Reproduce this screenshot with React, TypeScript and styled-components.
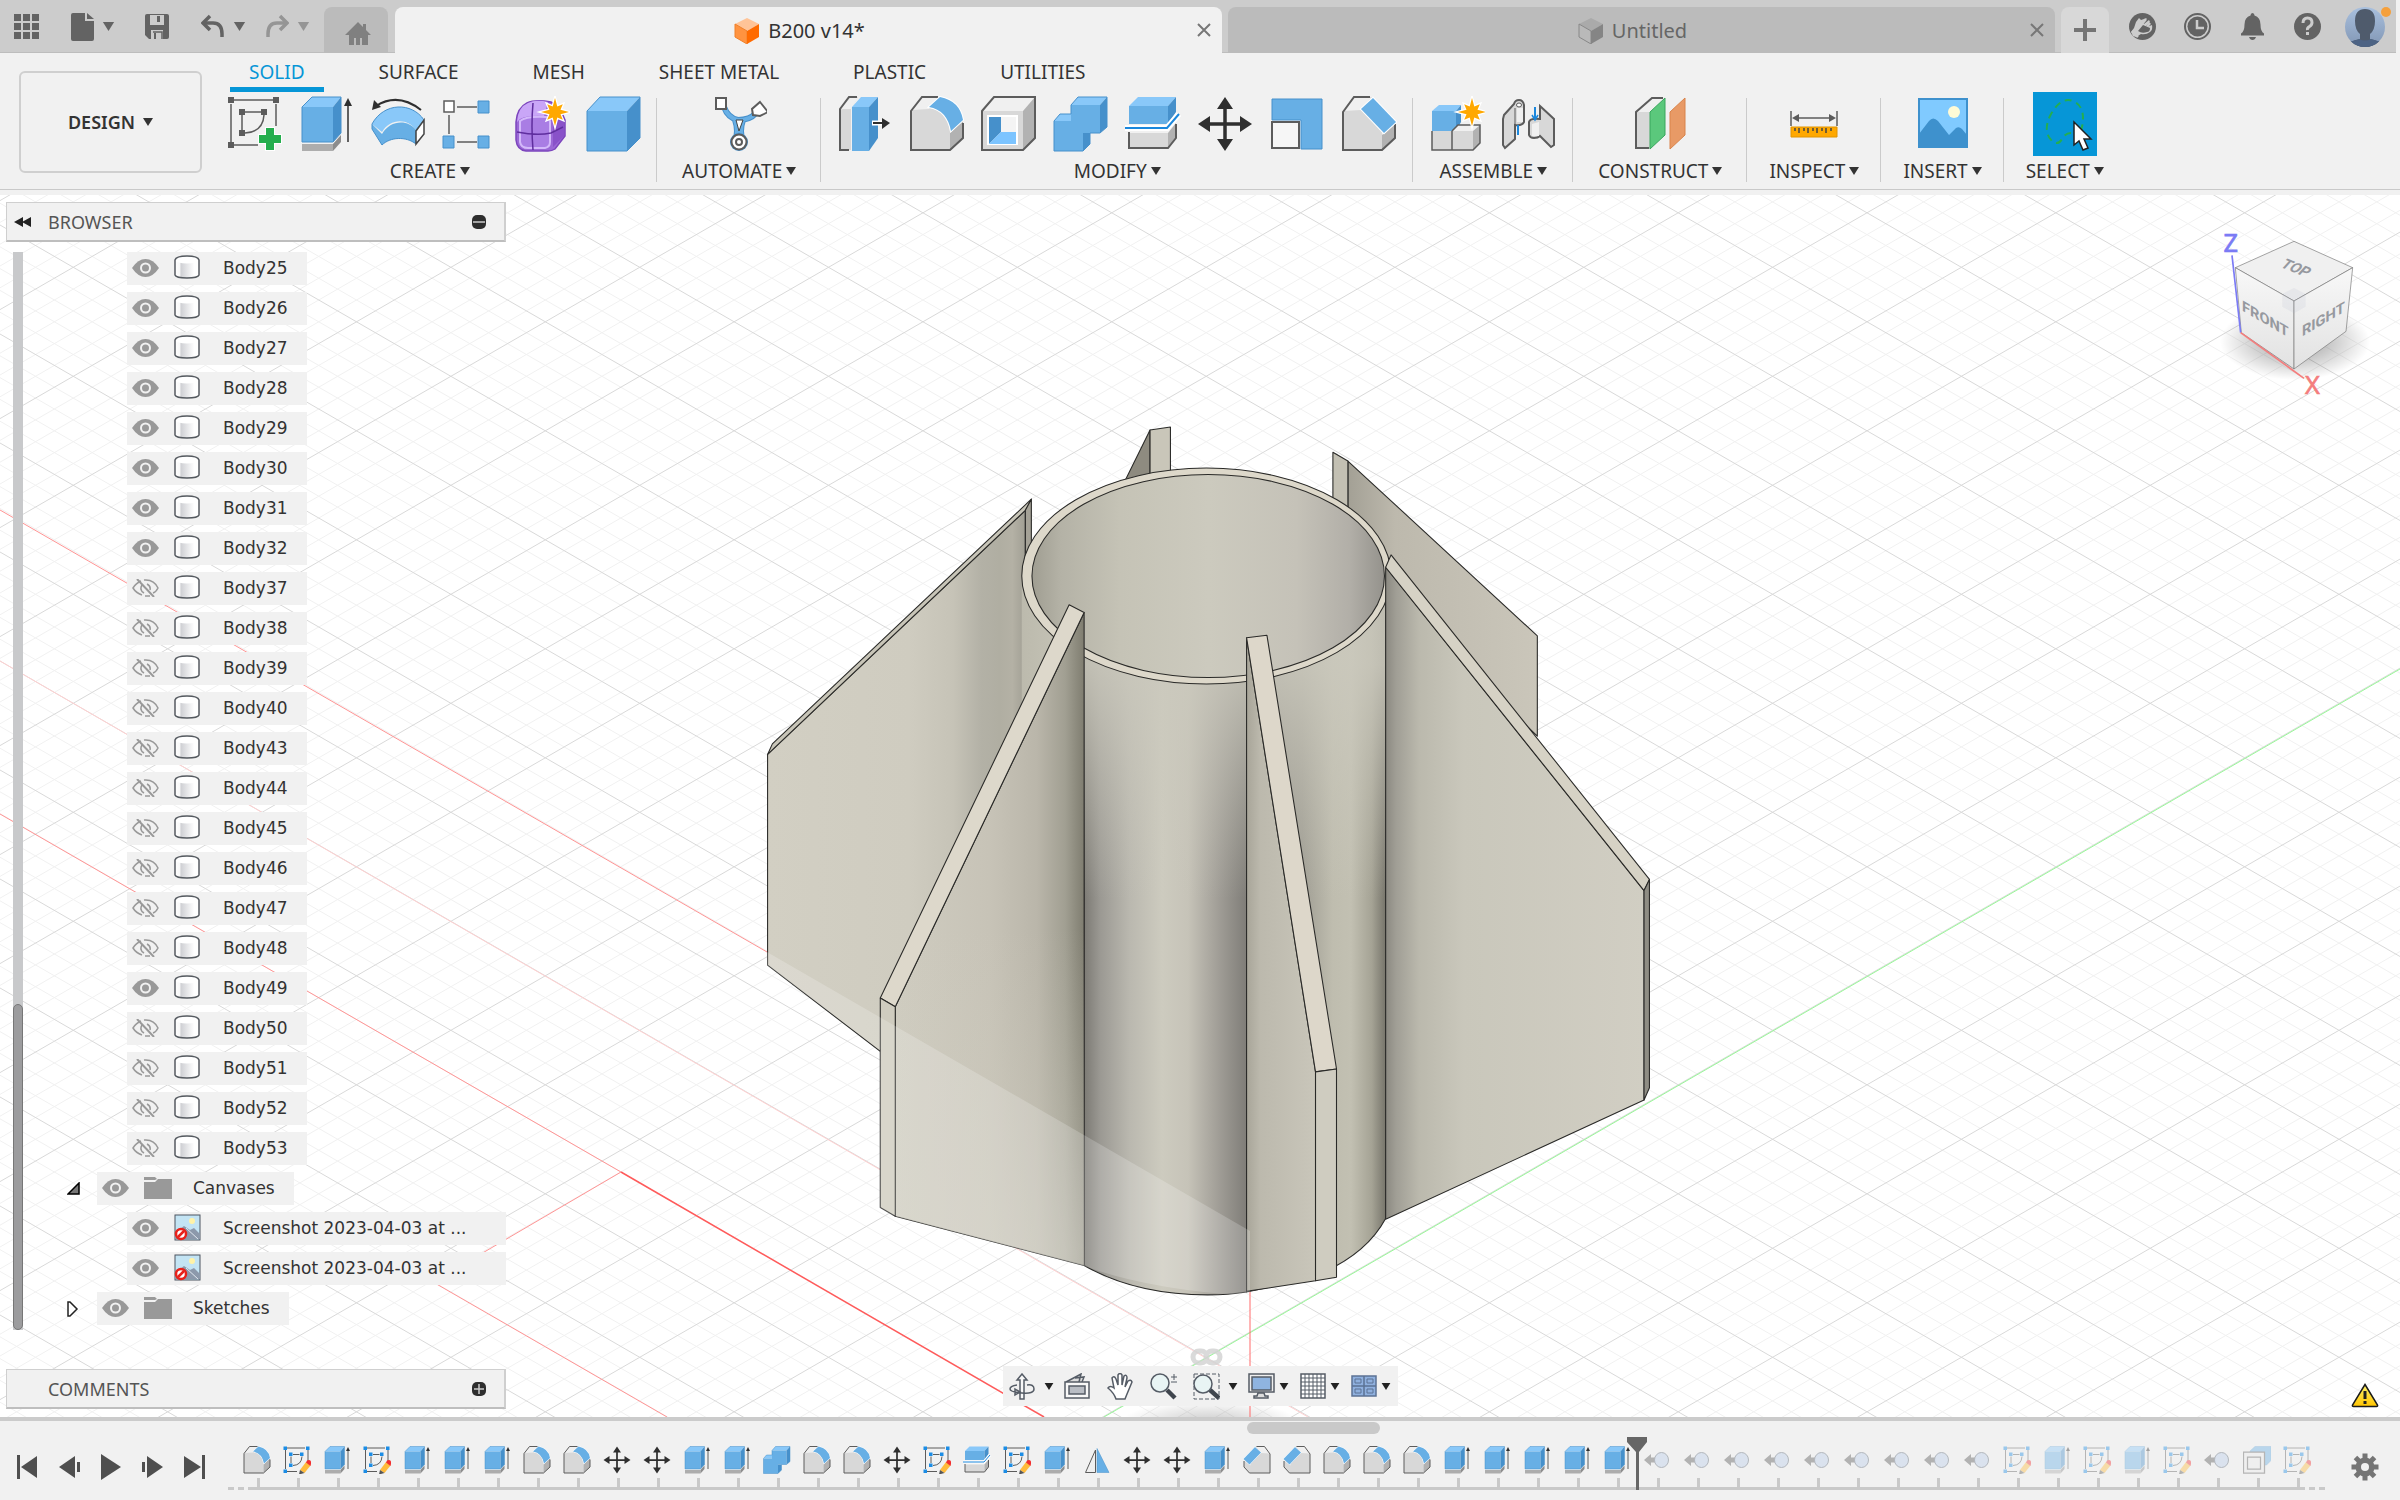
import React from "react";
import styled, { createGlobalStyle } from "styled-components";

const blue = "#67afe5";
const blueTop = "#89c8f9";
const blueSide = "#4690cb";
const line = "#5c5c5c";
const face = "#d8d8d8";
const faceTop = "#f0f0f0";
const faceSide = "#b2b2b2";

const GlobalStyle = createGlobalStyle`
  * { box-sizing: border-box; }
  html, body, #root { height: 100%; }
  body {
    margin: 0;
    background: #f1f1f1;
    color: #333;
    font-family: "Noto Sans", "Open Sans", sans-serif;
    font-size: 18px;
    line-height: 24px;
    overflow: hidden;
  }
  button { font: inherit; color: inherit; border: 0; padding: 0; background: none; }
  svg { display: block; flex: none; }
`;

/* ---------- layout ---------- */

const Page = styled.div`
  display: flex;
  flex-direction: column;
  height: 100vh;
`;

const TitleBar = styled.header`
  display: flex;
  align-items: flex-end;
  height: 53px;
  margin-right: 4px;
  background: #ccc;
  box-shadow: inset 0 -1px #bdbdbd;
`;

const QuickAccess = styled.div`
  display: flex;
  align-items: center;
  align-self: stretch;
  width: 324px;
  padding-left: 14px;
  color: #636363;
`;

const QuickButton = styled.button<{ $gap: number; $faded?: boolean }>`
  display: flex;
  align-items: center;
  gap: 8px;
  margin-right: ${(p) => p.$gap}px;
  color: ${(p) => (p.$faded ? "#959595" : "#636363")};
`;

const HomeTab = styled.button`
  display: grid;
  place-items: center;
  width: 64px;
  height: 46px;
  margin-right: 7px;
  padding: 6px 0 0 4px;
  border-radius: 8px 8px 0 0;
  background: #bbb;
  color: #808080;
`;

const DocTab = styled.div<{ $active?: boolean }>`
  display: flex;
  flex: 1;
  align-items: center;
  height: 46px;
  margin-right: 6px;
  padding-right: 10px;
  border-radius: 8px 8px 0 0;
  background: ${(p) => (p.$active ? "#f1f1f1" : "#bbb")};
  color: ${(p) => (p.$active ? "#333" : "#666")};
`;

const DocName = styled.button`
  display: flex;
  flex: 1;
  align-items: center;
  justify-content: center;
  gap: 8px;
  padding: 2px 0 0 8px;
  font-size: 20px;
`;

const AddTab = styled.button`
  display: grid;
  place-items: center;
  width: 48px;
  height: 46px;
  border-radius: 8px 8px 0 0;
  background: #d8d8d8;
  color: #757575;
`;

const Account = styled.div`
  display: flex;
  align-items: center;
  gap: 28px;
  align-self: stretch;
  width: 287px;
  padding-left: 20px;
  color: #636363;
`;

const StatusButton = styled.button`
  display: grid;
  place-items: center;
  width: 27px;
`;

const Avatar = styled.button`
  position: relative;
  width: 40px;
  height: 40px;
  margin-left: -4px;
`;

const AvatarDot = styled.span`
  position: absolute;
  top: 0;
  right: -6px;
  width: 10px;
  height: 10px;
  border-radius: 50%;
  background: #f5a03c;
`;

const Ribbon = styled.section`
  display: flex;
  height: 142px;
  padding-left: 19px;
  background: linear-gradient(#f1f1f1 136px, #c9c9c9 136px, #c9c9c9 137px, #f1f1f1 137px);
`;

const Workspace = styled.button`
  display: flex;
  align-items: center;
  justify-content: center;
  gap: 8px;
  width: 183px;
  height: 102px;
  margin-top: 18px;
  border: 2px solid #cfcfcf;
  border-radius: 6px;
  font-weight: 600;
`;

const RibbonMain = styled.div`
  display: flex;
  flex-direction: column;
`;

const RibbonTabs = styled.nav`
  display: flex;
  gap: 36px;
  height: 39px;
  padding-left: 28px;
`;

const RibbonTab = styled.button<{ $active?: boolean }>`
  height: 39px;
  padding: 4px 19px 0;
  border-bottom: 5px solid ${(p) => (p.$active ? "#0696d7" : "transparent")};
  color: ${(p) => (p.$active ? "#0696d7" : "#333")};
  font-size: 19px;
`;

const Groups = styled.div`
  display: flex;
  height: 91px;
`;

const Group = styled.div<{ $narrow?: boolean }>`
  display: flex;
  flex-direction: column;
  align-items: center;
  padding: 0 ${(p) => (p.$narrow ? 13 : 16)}px;
  background: linear-gradient(#cbcbcb, #cbcbcb) 100% 6px / 1px 84px no-repeat;
  &:first-child { padding: 0 15px 0 24px; }
  &:first-child > button { margin-right: 8px; }
  &:last-child { background: none; }
`;

const Tools = styled.div`
  display: flex;
  align-items: center;
  gap: 16px;
  height: 66px;
`;

const Tool = styled.button<{ $active?: boolean }>`
  display: grid;
  place-items: center;
  width: ${(p) => (p.$active ? 64 : 56)}px;
  height: ${(p) => (p.$active ? 64 : 56)}px;
  background: ${(p) => (p.$active ? "#0696d7" : "none")};
`;

const GroupLabel = styled.button`
  display: flex;
  align-items: center;
  gap: 4px;
  height: 24px;
  padding: 0 9px;
  margin-top: 3px;
  font-size: 19px;
`;

const Viewport = styled.main`
  position: relative;
  flex: 1;
  min-height: 0;
  overflow: hidden;
  background: #fff;
`;

const Scene = styled.svg`
  position: absolute;
  inset: 0;
  width: 100%;
  height: 100%;
`;

const CubeHolder = styled.div`
  position: absolute;
  top: 5px;
  right: 0;
`;

const Sidebar = styled.aside`
  position: absolute;
  top: 7px;
  bottom: 8px;
  left: 6px;
  display: flex;
  flex-direction: column;
  width: 500px;
`;

const PanelBar = styled.div`
  display: flex;
  align-items: center;
  height: 40px;
  padding: 0 18px 0 7px;
  border: 1px solid #cfcfcf;
  border-right-width: 2px;
  border-bottom: 2px solid #bebebe;
  background: #f1f1f1;
  color: #555;
`;

const PanelTitle = styled.h2`
  flex: 1;
  margin: 0;
  font-size: 18px;
  font-weight: 400;
`;

const Collapse = styled.button`
  width: 34px;
`;

const TreeArea = styled.div`
  display: flex;
  flex: 1;
  min-height: 0;
  padding: 10px 0 39px 7px;
`;

const ScrollTrack = styled.div`
  display: flex;
  flex-direction: column;
  justify-content: flex-end;
  width: 10px;
  background: #c8c9cb;
`;

const ScrollThumb = styled.div`
  height: 326px;
  border: 1px solid #777;
  border-radius: 5px;
  background: #9c9c9e;
`;

const Tree = styled.ul`
  display: flex;
  flex: 1;
  flex-direction: column;
  gap: 7px;
  margin: 0;
  padding: 0;
  list-style: none;
`;

const TreeLine = styled.li<{ $level: number }>`
  display: flex;
  padding-left: ${(p) => (p.$level === 2 ? 104 : 44)}px;
`;

const Twisty = styled.button`
  display: flex;
  align-items: center;
  width: 30px;
`;

const TreeItem = styled.div<{ $fill?: boolean }>`
  display: flex;
  flex: ${(p) => (p.$fill ? 1 : "none")};
  align-items: center;
  min-width: 178px;
  height: 33px;
  padding: 0 19px 2px 5px;
  background: #f1f1f1;
  color: #333;
  font-family: "DejaVu Sans", "Noto Sans", sans-serif;
  font-size: 17px;
`;

const EyeButton = styled.button`
  width: 42px;
`;

const ItemIcon = styled.span`
  width: 49px;
`;

const NavBar = styled.div`
  position: absolute;
  bottom: 11px;
  left: 50%;
  display: flex;
  align-items: center;
  width: 395px;
  height: 40px;
  margin-left: -197px;
  padding-left: 6px;
  background: #f1f1f1;
`;

const NavButton = styled.button<{ $gap?: number }>`
  display: flex;
  align-items: center;
  gap: ${(p) => p.$gap ?? 0}px;
  margin-right: ${(p) => (p.$gap ? 10 : 16)}px;
`;

const Warning = styled.button`
  position: absolute;
  right: 21px;
  bottom: 9px;
`;

const Timeline = styled.footer`
  display: flex;
  height: 83px;
  border-top: 4px solid #cbcbcb;
  background: #f1f1f1;
`;

const Playback = styled.div`
  display: flex;
  flex: none;
  align-items: center;
  justify-content: space-between;
  width: 188px;
  height: 92px;
  margin: 0 23px 0 17px;
  color: #4f4f4f;
`;

const TrackArea = styled.div`
  display: flex;
  flex: 1;
  flex-direction: column;
  min-width: 0;
`;

const TrackScroll = styled.div`
  width: 133px;
  height: 12px;
  margin: 1px 0 12px 1019px;
  border-radius: 6px;
  background: #c9c9c9;
`;

const Steps = styled.ol`
  display: flex;
  margin: 0;
  padding: 0 0 0 9px;
  list-style: none;
`;

const Step = styled.li<{ $faded?: boolean }>`
  display: flex;
  flex: none;
  flex-direction: column;
  align-items: center;
  width: 40px;
  height: 41px;
  background: linear-gradient(#c9c9c9, #c9c9c9) 20px 32px / 3px 9px no-repeat;
  button { opacity: ${(p) => (p.$faded ? 0.4 : 1)}; }
`;

const Marker = styled.li`
  position: relative;
  width: 0;
  svg { position: absolute; top: -9px; left: -10px; }
`;

const Rail = styled.div`
  display: flex;
  gap: 4px;
  height: 3px;
  i { width: 6px; background: #c9c9c9; }
  b { flex: 1; background: #c9c9c9; }
`;

const Settings = styled.button`
  flex: none;
  width: 75px;
  height: 92px;
  padding-left: 4px;
  display: grid;
  place-items: center;
  color: #757575;
`;

/* ---------- small glyphs ---------- */

const Caret = ({ w = 11, h = 9, color = "#333" }: { w?: number; h?: number; color?: string }) => (
  <svg width={w} height={h} viewBox="0 0 10 8"><path d="M0 0h10L5 8z" fill={color} /></svg>
);

const GridGlyph = () => (
  <svg width="25" height="25" viewBox="0 0 25 25" fill="currentColor">
    {[0, 9, 18].map((y) => [0, 9, 18].map((x) => <rect key={`${x}-${y}`} x={x} y={y} width="7" height="7" />))}
  </svg>
);
const FileGlyph = () => (
  <svg width="23" height="28" viewBox="0 0 23 28" fill="currentColor"><path d="M2 0h12v8h9v18q0 2-2 2H2q-2 0-2-2V2q0-2 2-2z" /><path d="M16 0l7 6h-7z" /></svg>
);
const SaveGlyph = () => (
  <svg width="24" height="25" viewBox="0 0 24 25">
    <path d="M2 0h20q2 0 2 2v21q0 2-2 2H4l-4-4V2q0-2 2-2z" fill="currentColor" />
    <path d="M5 1h14v10H5zM6 16h12v9H6z" fill="#ccc" />
    <path d="M12 2h3v6h-3zM9 19h2v6H9z" fill="currentColor" /><path d="M8 18h9v7" fill="none" stroke="currentColor" strokeWidth="1.500" />
  </svg>
);
const UndoGlyph = ({ flip }: { flip?: boolean }) => (
  <svg width="24" height="26" viewBox="0 -1 24 26">
    <g transform={flip ? "matrix(-1 0 0 1 24 0)" : undefined} fill="none" stroke="currentColor" strokeWidth="3.500">
      <path d="M9 1L2 8l7 7" /><path d="M3 8h9q9 0 9 11v3" />
    </g>
  </svg>
);
const HomeGlyph = () => (
  <svg width="26" height="23" viewBox="0 0 26 23" fill="currentColor"><path d="M13 0l5 5V2h3v6l5 5h-3v10h-6v-7h-2v7h-4v-7H9v7H4V13H0z" /></svg>
);
const DocCube = ({ grey }: { grey?: boolean }) => (
  <svg width="26" height="26" viewBox="0 0 26 26">
    <path d="M13 0l12 6-12 7L1 6z" fill={grey ? "#aaa" : "#ffc498"} />
    <path d="M1 6l12 7v13L1 19z" fill={grey ? "#b9b9b9" : "#ff9340"} stroke={grey ? "#888" : "#f08028"} />
    <path d="M25 6l-12 7v13l12-7z" fill={grey ? "#858585" : "#ff6a00"} />
  </svg>
);
const CloseGlyph = ({ color = "#777" }: { color?: string }) => (
  <svg width="16" height="16" viewBox="0 0 16 16"><path d="M2 2l12 12M14 2L2 14" stroke={color} strokeWidth="2" /></svg>
);
const PlusGlyph = () => (
  <svg width="22" height="22" viewBox="0 0 22 22"><path d="M11 0v22M0 11h22" stroke="currentColor" strokeWidth="4" /></svg>
);
const PlugGlyph = () => (
  <svg width="27" height="27" viewBox="0 0 27 27">
    <circle cx="13.500" cy="13.500" r="13.500" fill="currentColor" />
    <path d="M7 9l3-4 2 2 6-2-4 5 1 1 5-4 1 2-4 4 1 1 5-2q1 5-2 7-4 3-9 2l-5 3-3-1-2-4 3-4z" fill="#ccc" />
    <path d="M9 24L3 18" stroke="#ccc" strokeWidth="2.500" />
    <path d="M13 11l4-5M17 15l4-5" stroke="#ccc" strokeWidth="2.500" />
    <path d="M14 12l7 3q0 4-3 4-5 2-9-1z" fill="currentColor" />
  </svg>
);
const ClockGlyph = () => (
  <svg width="27" height="27" viewBox="0 0 27 27"><circle cx="13.500" cy="13.500" r="12.500" fill="none" stroke="currentColor" strokeWidth="2" /><circle cx="13.500" cy="13.500" r="10" fill="currentColor" /><path d="M13 7v8h7" fill="none" stroke="#ccc" strokeWidth="2.500" /></svg>
);
const BellGlyph = () => (
  <svg width="23" height="27" viewBox="0 0 23 27" fill="currentColor"><path d="M11.500 0q2 0 2 2.500 6 2 6 9 0 7 3.500 9v2H0v-2q3.500-2 3.500-9 0-7 6-9 0-2.500 2-2.500zM8 24h7q-1 3-3.500 3T8 24z" /></svg>
);
const HelpGlyph = () => (
  <svg width="27" height="27" viewBox="0 0 27 27"><circle cx="13.500" cy="13.500" r="13.500" fill="currentColor" /><path d="M9 10q0-5 4.500-5t4.500 4.500q0 2.500-2.500 4T13.500 17" fill="none" stroke="#ccc" strokeWidth="3" /><rect x="12" y="19" width="3" height="3" fill="#ccc" /></svg>
);
const AvatarArt = () => (
  <svg width="40" height="40" viewBox="0 0 40 40">
    <defs><linearGradient id="av" x2="0" y2="1"><stop stopColor="#a9c0de" /><stop offset="1" stopColor="#8196b4" /></linearGradient><clipPath id="avc"><circle cx="20" cy="20" r="20" /></clipPath></defs>
    <g clipPath="url(#avc)"><rect width="40" height="40" fill="url(#av)" /><path d="M10 14q0-12 10-12t10 12q0 9-5 13v5q12 2 13 8H2q1-6 13-8v-5q-5-4-5-13z" fill="#4f5b6c" /><path d="M0 36q12-3 14-4 6 3 12 0 6 2 14 4v4H0z" fill="#4d6384" /></g>
  </svg>
);

/* ---------- tool icons, all on a 56 unit square ---------- */

const Star = ({ cx, cy }: { cx: number; cy: number }) => {
  const pts = Array.from({ length: 16 }, (_, i) => {
    const r = i % 2 ? 6 : i % 4 ? 11 : 14;
    const a = (i * Math.PI) / 8;
    return `${(cx + r * Math.sin(a)).toFixed(1)},${(cy - r * Math.cos(a)).toFixed(1)}`;
  }).join(" ");
  return <polygon points={pts} fill="#ffa800" stroke="#fff" strokeWidth="2.500" paintOrder="stroke" />;
};

const art: Record<string, React.ReactNode> = {
  sketch: (
    <g>
      <path d="M8 4h39M5 8v38M50 8v22M8 49h24M19 16h16M16 19v15M38 19Q37 36 19 37" fill="none" stroke={line} strokeWidth="1.500" />
      <path d="M2 1h6v6H2zM47 1h6v6h-6zM2 46h6v6H2zM13 13h6v6h-6zM35 13h6v6h-6zM13 34h6v6h-6z" fill={line} />
      <path d="M40 32h8v7h7v8h-7v7h-8v-7h-7v-8h7z" fill="#25ae4e" stroke="#fff" strokeWidth="2" paintOrder="stroke" />
    </g>
  ),
  sketchEdit: (
    <g>
      <path d="M8 4h36M5 8v38M50 8v22M8 51h20M20 17h13M16 21v13M38 21Q37 38 20 39" fill="none" stroke={line} strokeWidth="2" />
      <path d="M1 1h7v7H1zM46 1h7v7h-7zM1 47h7v7H1zM12 13h7v7h-7zM34 13h7v7h-7zM12 35h7v7h-7z" fill="#1b8de6" />
      <path d="M46 32l9 7-12 15-9-6z" fill="#ffbb3b" /><path d="M48 29q6-3 9 3l-2 8-9-7z" fill="#f22f2f" /><path d="M34 48l9 6-11 3z" fill="#555" />
    </g>
  ),
  extrude: (
    <g>
      <path d="M4 11L14 1h29l-8 10z" fill={blueTop} /><path d="M4 11h31v35H4z" fill={blue} /><path d="M35 11l8-10v36l-8 9z" fill={blueSide} />
      <path d="M4 11L14 1h29v36l-8 9H4z" fill="none" stroke={blueSide} />
      <path d="M4 48h31v7H4z" fill="#adadad" /><path d="M35 48l8-9v7l-8 9z" fill="#8c8c8c" />
      <path d="M50 46V8" stroke="#2f2f2f" strokeWidth="1.500" /><path d="M50 2l4 8h-8z" fill="#2f2f2f" />
    </g>
  ),
  revolve: (
    <g>
      <path d="M2 28C14 6 42 6 54 24l-8 10C38 22 20 22 12 36z" fill={blueTop} />
      <path d="M2 28l10 10C20 24 38 23 46 34v14C36 40 20 41 12 49L2 33z" fill={blue} />
      <path d="M2 28C14 6 42 6 54 24l-8 10v14C36 40 20 41 12 49L2 33z" fill="none" stroke={blueSide} />
      <path d="M46 35l8-11v14l-8 10z" fill="#fff" stroke="#444" strokeWidth="1.500" />
      <path d="M51 14Q28-4 6 10" fill="none" stroke="#2f2f2f" strokeWidth="2" /><path d="M2 14l2-10 7 7z" fill="#2f2f2f" />
    </g>
  ),
  pattern: (
    <g>
      <path d="M15 11h20M15 46h20M7 19v19" stroke={line} strokeWidth="1.500" />
      <path d="M2 5h10v11H2z" fill="#fff" stroke={line} strokeWidth="1.500" />
      <path d="M36 5h11v12H36zM1 40h11v12H1zM36 40h11v12H36z" fill={blue} stroke={blueSide} strokeWidth="1" />
    </g>
  ),
  form: (
    <g>
      <path d="M2 26Q3 12 13 7q8-4 24-1 9 4 14 18v16L41 53q-3 2-7 2H12Q3 54 2 44z" fill="#9b68d6" stroke="#7c45bd" strokeWidth="1.500" />
      <path d="M3 26Q4 11 14 7q8-4 20-1l-4 14q-16-1-24 3z" fill="#c9a6f7" />
      <path d="M6 25q6-5 26-4 4 1 4 5v20q0 5-5 6H14q-7 0-8-6z" fill="#a97de4" stroke="#d3b8fa" strokeWidth="2" />
      <path d="M39 24l11 0v16L39 51z" fill="#7d44c0" opacity=".6" />
      <path d="M19 7q-2 22 0 47M3 36q20 4 34 1l12-6" fill="none" stroke="#5f2e9e" strokeWidth="1.500" />
      <Star cx={41} cy={16} />
    </g>
  ),
  box: (
    <g>
      <path d="M1 15L14 1h40L41 15z" fill={blueTop} /><path d="M1 15h40v40H1z" fill={blue} /><path d="M41 15L54 1v41L41 55z" fill={blueSide} />
      <path d="M1 15L14 1h40v41L41 55H1z" fill="none" stroke={blueSide} />
    </g>
  ),
  automate: (
    <g>
      <path d="M13 11q4 11 14 13 12 0 18-7M24 24q4 11 0 22M32 24q-4 11 0 22" fill="none" stroke={blueSide} strokeWidth="6" />
      <path d="M13 11q4 11 14 13 12 0 18-7M24 24q4 11 0 22M32 24q-4 11 0 22" fill="none" stroke={blue} strokeWidth="4" />
      <circle cx="28" cy="46" r="9" fill={blueSide} />
      <path d="M25 24h7l-4 11z" fill="#fff" stroke="#444" />
      <path d="M5 2h10v11H5z" fill="#fff" stroke={line} strokeWidth="2" />
      <path d="M49 6l8 10-8 4-7-1-1-6z" fill="#fff" stroke={line} strokeWidth="2" />
      <circle cx="28" cy="46" r="7.500" fill="#fff" stroke={line} strokeWidth="2" /><circle cx="28" cy="46" r="3" fill="none" stroke={line} strokeWidth="2" />
    </g>
  ),
  press: (
    <g>
      <path d="M3 13L12 1h9L14 13v41H3z" fill={face} /><path d="M4 13L13 2h8l-7 11z" fill={faceTop} /><path d="M20 1h-8L3 13v41h9" fill="none" stroke={line} strokeWidth="2" />
      <path d="M15 11L24 1h17L32 11z" fill={blueTop} /><path d="M15 11h17v44H15z" fill={blue} /><path d="M32 11l9-10v41l-9 13z" fill={blueSide} />
      <path d="M35 27h10" stroke="#fff" strokeWidth="5" /><path d="M36 27h11" stroke="#2f2f2f" strokeWidth="2" /><path d="M45 22l8 5-8 6z" fill="#2f2f2f" />
    </g>
  ),
  fillet: (
    <g>
      <path d="M2 15L13 1h17L21 12q18 4 20 24v18H2z" fill={face} /><path d="M3 14L13 2h15l-8 11z" fill={faceTop} />
      <path d="M41 37l13-12v17L41 54z" fill={faceSide} /><path d="M29 1H13L2 15v39h39l13-12V27" fill="none" stroke={line} strokeWidth="2" />
      <path d="M20 11L31 1q20 4 23 23L42 35Q38 14 20 11z" fill={blue} stroke="#fff" strokeWidth="2" paintOrder="stroke" />
    </g>
  ),
  chamfer: (
    <g>
      <path d="M2 16L13 1h18L21 14l20 22v18H2z" fill={face} /><path d="M3 15L13 2h17l-10 12z" fill={faceTop} />
      <path d="M41 39l13-11v14L41 54z" fill={faceSide} /><path d="M29 1H13L2 16v38h39l13-12V28" fill="none" stroke={line} strokeWidth="2" />
      <path d="M32 2l23 24-12 11-23-24z" fill={blue} stroke="#fff" strokeWidth="2" paintOrder="stroke" />
    </g>
  ),
  chamferBack: (
    <g>
      <path d="M54 16L43 1H25l10 13-20 22v3L2 29v13l11 12h41z" fill={face} /><path d="M53 15L43 2H27l9 12z" fill={faceTop} />
      <path d="M27 1h16l11 15v38H13L2 42V30" fill="none" stroke={line} strokeWidth="2" />
      <path d="M24 2L1 26l12 11 23-24z" fill={blue} stroke="#fff" strokeWidth="2" paintOrder="stroke" />
    </g>
  ),
  shell: (
    <g>
      <path d="M1 15L13 1h41L42 15z" fill={faceTop} /><path d="M1 15h41v39H1z" fill={face} /><path d="M42 15L54 1v41L42 54z" fill={faceSide} />
      <path d="M1 15L13 1h41v41L42 54H1z" fill="none" stroke={line} strokeWidth="2" />
      <path d="M7 20h29v28H7z" fill="#f4f4f4" stroke="#fff" strokeWidth="2" /><path d="M8 21h12v15L8 48z" fill={blueSide} /><path d="M20 36h15v12H8z" fill="#7cc4ff" />
    </g>
  ),
  combine: (
    <g>
      <path d="M1 25l6-7h11v7zM18 9l7-8h29l-7 8z" fill={blueTop} /><path d="M1 25h17V9h29v28H30v18H1z" fill={blue} />
      <path d="M47 9l7-8v30l-7 6zM30 37h7v11l-7 7z" fill={blueSide} /><path d="M1 25l6-7h11V9l7-8h29v30l-7 6H37v11l-7 7H1z" fill="none" stroke={blueSide} />
    </g>
  ),
  split: (
    <g>
      <path d="M4 10l9-9h38l-8 9z" fill={blueTop} /><path d="M4 10h39v18H4z" fill={blue} /><path d="M43 10l8-9v15l-8 12z" fill={blueSide} />
      <path d="M4 37h39v15H4z" fill={face} /><path d="M43 37l8-10v15l-8 10z" fill={faceSide} /><path d="M4 36v16h39l8-10V28" fill="none" stroke={line} strokeWidth="2" />
      <path d="M0 32h42l12-14" fill="none" stroke="#fff" strokeWidth="6" /><path d="M0 32h42l12-14" fill="none" stroke="#1b87dc" strokeWidth="2" />
    </g>
  ),
  move: (
    <g>
      <path d="M28 10v36M10 28h36" stroke="#2f2f2f" strokeWidth="3.500" />
      <path d="M28 1l8 12H20zM28 55l8-12H20zM1 28l12-8v16zM55 28l-12-8v16z" fill="#2f2f2f" />
    </g>
  ),
  scale: (
    <g><path d="M3 3h50v50H32V24H3z" fill={blue} stroke={blueSide} /><path d="M3 26h27v26H3z" fill="#f6f6f6" stroke={line} strokeWidth="2" /></g>
  ),
  component: (
    <g>
      <path d="M3 15l7-6h22l-5 6z" fill={blueTop} /><path d="M3 15h24v20H3z" fill={blue} /><path d="M27 15l5-6v17l-5 9z" fill={blueSide} />
      <path d="M23 35l6-6h22l-7 6z" fill={faceTop} /><path d="M3 35h41v19H3z" fill={face} /><path d="M44 35l7-6v18l-7 7z" fill={faceSide} />
      <path d="M3 35v19h41l7-7V29H29l-6 6M23 35v19" fill="none" stroke={line} strokeWidth="1.500" />
      <Star cx={43} cy={16} />
    </g>
  ),
  joint: (
    <g>
      <path d="M3 19L13 8q1-4 5-4t5 5v17q-2 4-9 3v14L4 52l-2-3V23z" fill={face} stroke={line} strokeWidth="2" />
      <path d="M14 12v18" stroke={line} /><path d="M16 12h6v14h-6z" fill={faceTop} /><ellipse cx="18" cy="9" rx="2.500" ry="2" fill="#fff" stroke={line} />
      <path d="M39 10l14 13v26l-3 2-11-11q-2 2-6 2-4 0-5-3V26q1-4 11-3z" fill={face} stroke={line} strokeWidth="2" />
      <path d="M38 26v14h-7V28z" fill={faceTop} /><path d="M17 29v10M34 11v13" stroke="#1b87dc" strokeWidth="2" /><path d="M31 19l3 5 3-5" stroke="#1b87dc" strokeWidth="1.500" fill="none" />
    </g>
  ),
  construct: (
    <g>
      <path d="M4 16L20 2h12L18 16z" fill={faceTop} /><path d="M4 16h14v36H4z" fill={face} /><path d="M31 2H20L4 16v36h13" fill="none" stroke={line} strokeWidth="2" />
      <path d="M18 16L33 2v37L18 53z" fill="#5bc87c" stroke="#38a65c" /><path d="M38 16L53 2v37L38 53z" fill="#e89a66" stroke="#d9834a" />
    </g>
  ),
  inspect: (
    <g>
      <path d="M5 15v15M51 15v15M8 22h40" stroke={line} strokeWidth="1.500" /><path d="M6 22l7-4v8zM50 22l-7-4v8z" fill={line} />
      <path d="M5 31h46v10H5z" fill="#ffa800" stroke="#e09400" /><path d="M9 32v3M13 32v5M18 32v3M22 32v5M27 32v3M31 32v5M36 32v3M40 32v5M45 32v3" stroke="#444" strokeWidth="1.500" />
    </g>
  ),
  insert: (
    <g>
      <path d="M4 3h48v48H4z" fill="#80caff" /><circle cx="39" cy="16" r="6" fill="#fffbd6" />
      <path d="M4 38l10-13q4-5 9 0l11 14 7-7q3-2 6 1l5 6v12H4z" fill="#3e91cd" /><path d="M4 3h48v48H4z" fill="none" stroke="#3e91cd" strokeWidth="2" />
    </g>
  ),
  select: (
    <g>
      <path d="M34 37q-6 0-9 6-4 7-10 2-10-10-1-27Q25-1 38 6q12 7 6 29" fill="none" stroke="#25ae4e" strokeWidth="2" strokeDasharray="7 5" />
      <path d="M37 26v23l5-4 4 9 5-2-4-9h7z" fill="#fff" stroke="#222" strokeWidth="1.500" />
    </g>
  ),
  mirror: (
    <g><path d="M25 8v45H5z" fill={faceTop} stroke={line} strokeWidth="2" /><path d="M28 5v48h24z" fill={blue} stroke={blueSide} /></g>
  ),
  back: (
    <g><path d="M2 28l14-12v7h12v10H16v7z" fill="#555" /><ellipse cx="37" cy="28" rx="14" ry="15" fill="#b8cdea" stroke="#55606e" strokeWidth="2" /></g>
  ),
  copy: (
    <g><path d="M14 10l10-9h32v28l-9 9H38V12H14z" fill={blue} stroke={blueSide} /><path d="M1 12h42v42H1zM9 22h26v24H9z" fill="#eee" stroke={line} strokeWidth="2.500" /></g>
  ),
};

const Icon = ({ name, size = 56 }: { name: string; size?: number }) => (
  <svg width={size} height={size} viewBox="0 0 56 56">{art[name]}</svg>
);

/* ---------- browser tree ---------- */

const Eye = () => (
  <svg width="27" height="18" viewBox="0 0 27 18"><path d="M0 9Q6 0 13.500 0T27 9Q21 18 13.500 18T0 9z" fill="#999" /><circle cx="13.500" cy="9" r="4.500" fill="#999" stroke="#f1f1f1" strokeWidth="2" /></svg>
);
const EyeOff = () => (
  <svg width="27" height="18" viewBox="0 0 27 18" fill="none" stroke="#999" strokeWidth="1.500">
    <path d="M9 2Q4 4 1 9q3 5 9 7M12 1q10-1 14 8-2 4-5 5M13 17h5M10 6q-3 5 2 8M15 5q4 2 3 6" /><path d="M5 0l17 18" strokeWidth="2" />
  </svg>
);
const BodyGlyph = () => (
  <svg width="27" height="25" viewBox="0 0 27 25">
    <defs><linearGradient id="cyl"><stop stopColor="#fff" /><stop offset=".2" stopColor="#f8f8f8" /><stop offset=".25" stopColor="#cfd0d4" /><stop offset=".8" stopColor="#fff" /></linearGradient></defs>
    <path d="M1 5v15q1 3 12 3t12-3V5z" fill="url(#cyl)" /><ellipse cx="13" cy="5" rx="12" ry="3.500" fill="#fff" />
    <path d="M1 5q1-4 12-4t12 4v15q-1 3-12 3T1 20z" fill="none" stroke="#555a60" strokeWidth="1.500" />
  </svg>
);
const FolderGlyph = () => (
  <svg width="28" height="22" viewBox="0 0 28 22" fill="#999"><path d="M0 0h11l2 2H28v20H0V5h11l3-3h-1L11 3H0z" /></svg>
);
const CanvasGlyph = () => (
  <svg width="27" height="27" viewBox="0 0 27 27">
    <rect x="1" y="1" width="25" height="25" fill="#c3e4f4" stroke="#4c5560" /><circle cx="18" cy="7" r="3" fill="#fff3a8" />
    <path d="M2 18l8-6 6 4 4-2 6 6v5H2z" fill="#8c99ab" /><path d="M12 14l12 11" stroke="#dfe6ee" />
    <circle cx="7" cy="20" r="5" fill="#fff" stroke="#e8221b" strokeWidth="2.500" /><path d="M4 23l6-6" stroke="#e8221b" strokeWidth="2.500" />
  </svg>
);
const Badge = ({ plus }: { plus?: boolean }) => (
  <svg width="14" height="14" viewBox="0 0 14 14"><rect width="14" height="14" rx="5" fill="#2e2e2e" /><path d={plus ? "M2 7h10M7 2v10" : "M1 7h12"} stroke="#ccc" strokeWidth="1.500" /></svg>
);

const bodies: [number, boolean][] = [
  [25, true], [26, true], [27, true], [28, true], [29, true], [30, true], [31, true], [32, true],
  [37, false], [38, false], [39, false], [40, false], [43, false], [44, false], [45, false], [46, false],
  [47, false], [48, false], [49, true], [50, false], [51, false], [52, false], [53, false],
];

const Browser = () => (
  <Sidebar>
    <PanelBar>
      <Collapse aria-label="Collapse browser"><svg width="17" height="10" viewBox="0 0 17 10"><path d="M9 0v10L0 5zM17 0v10L8 5z" fill="#222" /></svg></Collapse>
      <PanelTitle>BROWSER</PanelTitle>
      <button aria-label="Hide browser"><Badge /></button>
    </PanelBar>
    <TreeArea>
      <ScrollTrack><ScrollThumb /></ScrollTrack>
      <Tree>
        {bodies.map(([n, on]) => (
          <TreeLine key={n} $level={2}>
            <TreeItem>
              <EyeButton aria-label={`Toggle Body${n}`}>{on ? <Eye /> : <EyeOff />}</EyeButton>
              <ItemIcon><BodyGlyph /></ItemIcon>Body{n}
            </TreeItem>
          </TreeLine>
        ))}
        <TreeLine $level={1}>
          <Twisty aria-label="Collapse Canvases"><svg width="13" height="13" viewBox="0 0 13 13"><path d="M1 12h11V1z" fill="#777" stroke="#000" strokeWidth="1.500" /></svg></Twisty>
          <TreeItem><EyeButton aria-label="Toggle Canvases"><Eye /></EyeButton><ItemIcon><FolderGlyph /></ItemIcon>Canvases</TreeItem>
        </TreeLine>
        {[1, 2].map((n) => (
          <TreeLine key={n} $level={2}>
            <TreeItem $fill><EyeButton aria-label={`Toggle canvas ${n}`}><Eye /></EyeButton><ItemIcon><CanvasGlyph /></ItemIcon>Screenshot 2023-04-03 at ...</TreeItem>
          </TreeLine>
        ))}
        <TreeLine $level={1}>
          <Twisty aria-label="Expand Sketches"><svg width="12" height="16" viewBox="0 0 12 16"><path d="M1 1h2l7 7-7 7H1z" fill="#fff" stroke="#222" strokeWidth="1.500" /></svg></Twisty>
          <TreeItem><EyeButton aria-label="Toggle Sketches"><Eye /></EyeButton><ItemIcon><FolderGlyph /></ItemIcon>Sketches</TreeItem>
        </TreeLine>
      </Tree>
    </TreeArea>
    <PanelBar>
      <Collapse as="span" />
      <PanelTitle>COMMENTS</PanelTitle>
      <button aria-label="Add comment"><Badge plus /></button>
    </PanelBar>
  </Sidebar>
);

/* ---------- 3D scene ---------- */

const slope = 0.5773;
const stepY = 21.8;
const gridPath = (major: boolean) => {
  let d = "";
  const base = 267.3 - 73.3 * slope;
  const base2 = 267.3 + 73.3 * slope;
  for (let k = -70; k < 130; k++) {
    if ((k % 5 === 0) !== major) continue;
    const a = base + k * stepY;
    const b = base2 + k * stepY;
    d += `M0 ${a.toFixed(1)}L2400 ${(a + 2400 * slope).toFixed(1)}M0 ${b.toFixed(1)}L2400 ${(b - 2400 * slope).toFixed(1)}`;
  }
  return d;
};

const stops = (list: [number, string][]) => list.map(([o, c]) => <stop key={o} offset={o} stopColor={c} />);
const Grad = ({ id, x1, x2, list }: { id: string; x1: number; x2: number; list: [number, string][] }) => (
  <linearGradient id={id} gradientUnits="userSpaceOnUse" x1={x1} x2={x2} y1="0" y2="0">{stops(list)}</linearGradient>
);

const Model = () => (
  <g transform="translate(740 400) scale(.5995 .5868)" stroke="#2a2a28" strokeWidth="1.800" strokeLinejoin="round">
    <defs>
      <Grad id="finL" x1={46} x2={476} list={[[0, "#d2cfc3"], [0.55, "#cfccc0"], [0.72, "#c6c3b7"], [0.83, "#b3b1a6"], [0.9, "#b0aea2"], [0.95, "#b4b1a5"], [1, "#a19f94"]]} />
      <Grad id="finBR" x1={1014} x2={1330} list={[[0, "#a3a095"], [0.25, "#bdb9ad"], [1, "#cac6ba"]]} />
      <Grad id="inner" x1={488} x2={1075} list={[[0, "#a09e92"], [0.08, "#b4b2a6"], [0.25, "#c5c3b6"], [0.5, "#cccabe"], [0.75, "#c5c2b8"], [0.9, "#b2afa8"], [1, "#94928c"]]} />
      <Grad id="bodyA" x1={470} x2={574} list={[[0, "#bcbaad"], [1, "#c9c7ba"]]} />
      <Grad id="bodyB" x1={574} x2={845} list={[[0, "#7c7a74"], [0.1, "#9b9993"], [0.28, "#bab8af"], [0.48, "#cdcbbf"], [0.64, "#c6c3b8"], [0.82, "#a29f98"], [1, "#7f7d78"]]} />
      <Grad id="bodyC" x1={845} x2={1077} list={[[0, "#84827c"], [0.4, "#9f9d93"], [0.62, "#bfbdaf"], [0.75, "#c2c0b2"], [0.9, "#a5a395"], [1, "#77756b"]]} />
      <Grad id="finR" x1={1077} x2={1508} list={[[0, "#8b8981"], [0.04, "#a09e95"], [0.13, "#bbb9ad"], [0.3, "#c9c7bb"], [1, "#d1cec3"]]} />
      <Grad id="finFL" x1={259} x2={574} list={[[0, "#cfccc0"], [0.5, "#c7c3b7"], [0.75, "#bab6aa"], [0.9, "#a19f92"], [1, "#7f7d70"]]} />
      <Grad id="finFR" x1={845} x2={960} list={[[0, "#a8a599"], [0.2, "#bcb9ad"], [1, "#c9c6ba"]]} />
      <linearGradient id="topLight" gradientUnits="userSpaceOnUse" x1="0" x2="0" y1="450" y2="850"><stop stopColor="#cbc9bd" stopOpacity=".85" /><stop offset="1" stopColor="#cbc9bd" stopOpacity="0" /></linearGradient>
      <linearGradient id="finLight" gradientUnits="userSpaceOnUse" x1="0" x2="0" y1="900" y2="1450"><stop stopColor="#d0cec1" stopOpacity="0" /><stop offset="1" stopColor="#d0cec1" stopOpacity=".5" /></linearGradient>
    </defs>
    <path d="M641 140L684 51V135z" fill="#8e8b80" /><path d="M684 51L718 46V130H684z" fill="#c9c6b9" />
    <path d="M1014 104L1330 402V573L1085 330L1014 190z" fill="url(#finBR)" /><path d="M989 89L1014 104V190L989 180z" fill="#c3c0b3" />
    <path d="M46 604L476 188V300H474V600L234 1110L46 963z" fill="url(#finL)" /><path d="M46 604L54 586L486 169L476 188z" fill="#c8c5b8" /><path d="M476 188L486 169V250L476 270z" fill="#a5a297" />
    <path d="M470 300V700H580V300z" fill="url(#bodyA)" stroke="none" />
    <path d="M574 360V1475Q660 1525 780 1525Q815 1525 845 1520V360z" fill="url(#bodyB)" />
    <path d="M845 360V1520L940 1500Q1040 1465 1077 1395V280z" fill="url(#bodyC)" />
    <path d="M574 300H1077V900H574z" fill="url(#topLight)" stroke="none" />
    <path d="M470 300A308 184 0 0 1 1086 300A308 184 0 0 1 470 300z" fill="#ddd8ca" />
    <ellipse cx="781" cy="300" rx="294" ry="173" fill="url(#inner)" />
    <path d="M1077 285L1508 836V1193L1077 1396z" fill="url(#finR)" /><path d="M1077 285L1086 264L1517 817L1508 836z" fill="#d6d2c5" /><path d="M1508 836L1517 817V1172L1508 1193z" fill="#8f8d84" />
    <path d="M574 362V1475L259 1391V1034z" fill="url(#finFL)" /><path d="M574 362V1475L259 1391V1034z" fill="url(#finLight)" stroke="none" />
    <path d="M549 349L574 362L259 1034L234 1019z" fill="#ddd8cb" /><path d="M234 1019L259 1034V1391L234 1376z" fill="#cfccbf" />
    <path d="M845 405L960 1145V1501L845 1519z" fill="url(#finFR)" /><path d="M845 405L879 401L995 1140L960 1145z" fill="#ddd7ca" /><path d="M960 1145L995 1140V1495L960 1501z" fill="#cfccc0" />
  </g>
);

const ModelScene = () => (
  <Scene viewBox="0 195 2400 1222" preserveAspectRatio="xMidYMid slice" role="img" aria-label="Finned tube model">
    <defs><radialGradient id="shade"><stop stopColor="#000" stopOpacity=".22" /><stop offset="1" stopColor="#000" stopOpacity="0" /></radialGradient></defs>
    <path d={gridPath(false)} stroke="#f1f1f1" strokeWidth="1" />
    <path d={gridPath(true)} stroke="#d9d9d9" strokeWidth="1" />
    <ellipse cx="1210" cy="1424" rx="90" ry="24" fill="url(#shade)" />
    <path d="M0 661L1308 1417" stroke="#ffd0d0" />
    <path d="M0 814L621 1172L433 1282L667 1417M0 510L767 952" stroke="#ff9494" fill="none" />
    <path d="M621 1172L1044 1417" stroke="#ff5a5a" strokeWidth="1.500" />
    <path d="M1104 1417L2400 669" stroke="#98f898" />
    <Model />
    <path d="M767 952L1250 1231V1296Q1150 1290 1084 1266L880 1212V1050L767 965z" fill="#fff" opacity=".2" />
    <path d="M1250 1292V1417" stroke="#ff6a6a" />
    <g fill="none" stroke="#d4d4d4" strokeWidth="5" opacity=".85"><rect x="1193" y="1351" width="14" height="12" rx="6" /><rect x="1206" y="1351" width="14" height="12" rx="6" /></g>
  </Scene>
);

const ViewCube = () => (
  <svg width="220" height="220" viewBox="0 0 660 660" role="img" aria-label="View cube">
    <defs>
      <radialGradient id="cubeShade"><stop stopColor="#000" stopOpacity=".4" /><stop offset=".6" stopColor="#000" stopOpacity=".16" /><stop offset="1" stopColor="#000" stopOpacity="0" /></radialGradient>
      <linearGradient id="cubeFace" x2="0" y2="1"><stop stopColor="#f8f8f8" /><stop offset="1" stopColor="#e2e2e2" /></linearGradient>
    </defs>
    <ellipse cx="345" cy="425" rx="225" ry="115" fill="url(#cubeShade)" />
    <g stroke="#777" strokeWidth="2" strokeLinejoin="round">
      <path d="M342 124L518 203L342 303L166 203z" fill="#f0f0f0" /><path d="M166 203L342 303V507L184 398z" fill="url(#cubeFace)" /><path d="M342 303L518 203L498 394L342 507z" fill="url(#cubeFace)" />
    </g>
    <path d="M342 264l35 18v38l-35 20-35-20v-38z" fill="#aab4c8" opacity=".14" />
    <path d="M156 166L182 398" stroke="#7b7bf5" strokeWidth="5" /><path d="M182 398L372 535" stroke="#f47d7d" strokeWidth="5" />
    <g fontFamily="Roboto, 'Noto Sans', sans-serif" fontWeight="700" fontSize="44" fill="#96999f" textAnchor="middle">
      <text transform="translate(256 372) skewY(30)">FRONT</text><text transform="translate(430 372) skewY(-30)">RIGHT</text><text transform="translate(338 216) rotate(22) skewX(-20)">TOP</text>
    </g>
    <g fontFamily="'Noto Sans', sans-serif" fontSize="76" textAnchor="middle" strokeWidth="2"><text x="152" y="157" fill="#7b7bf5" stroke="#7b7bf5">Z</text><text x="397" y="582" fill="#f47d7d" stroke="#f47d7d">X</text></g>
  </svg>
);

/* ---------- navigation bar ---------- */

const ink = "#555c66";
const navArt: { label: string; gap?: number; art: React.ReactNode }[] = [
  { label: "Orbit", gap: 8, art: <g fill="#f8f8f8" stroke={ink} strokeWidth="1.500"><path d="M13 1l5 6h-3v19h-4V7H8z" /><path d="M8 12Q1 13 1 16t12 4 12-4-7-4M11 19l-5-3v6z" fill="none" /></g> },
  { label: "Look at", art: <g stroke={ink} strokeWidth="1.500"><path d="M2 9L17 1l-2 8M11 5l9-1-2 5" fill="#ddd" /><path d="M1 9h24v16H1z" fill="#f8f8f8" /><path d="M5 13h16v8H5z" fill="#b9bdc4" /></g> },
  { label: "Pan", art: <path d="M9 26Q7 20 1 15q2-3 6 0L5 5q2-3 4 1l2 6V2q2-3 4 0v10l2-9q3-2 3 2l-2 9 3-6q3-2 4 1l-5 12-2 5z" fill="#fff" stroke={ink} strokeWidth="1.500" /> },
  { label: "Zoom", art: <g><path d="M17 17l8 8" stroke="#3f454d" strokeWidth="4.500" /><circle cx="10" cy="10" r="9" fill="#e8f4f4" stroke={ink} strokeWidth="1.500" /><path d="M21 4h6M24 1v6M21 9h6" stroke={ink} /></g> },
  { label: "Fit", gap: 8, art: <g><path d="M1 1h25v25H1z" fill="none" stroke={ink} strokeDasharray="4 2" /><path d="M17 17l9 8" stroke="#3f454d" strokeWidth="4.500" /><circle cx="10" cy="11" r="9" fill="#e8f4f4" stroke={ink} strokeWidth="1.500" /></g> },
  { label: "Display settings", gap: 4, art: <g stroke={ink} strokeWidth="1.500"><path d="M1 1h25v18H1z" fill="#eee" /><path d="M4 4h19v13H4z" fill="#8fb4e0" /><path d="M10 20h6l1 3h3v2H6v-2h3z" fill="#ddd" /></g> },
  { label: "Grid and snaps", gap: 4, art: <g stroke={ink}><path d="M2 1h24v24H2z" fill="#fff" strokeWidth="1.500" /><path d="M6 1v24M10 1v24M14 1v24M18 1v24M22 1v24M2 5h24M2 9h24M2 13h24M2 17h24M2 21h24" /></g> },
  { label: "Viewports", gap: 4, art: <g stroke="#5c7294" strokeWidth="1.500" fill="#8fb0de"><path d="M2 3h24v20H2z" /><path d="M14 3v20M2 13h24" /><path d="M5 6h6v4H5zM17 6h6v4h-6zM5 16h6v4H5zM17 16h6v4h-6z" fill="none" strokeWidth="1" /></g> },
];

/* ---------- timeline ---------- */

const timeline = (
  "fillet sketchEdit extrude sketchEdit extrude extrude extrude fillet fillet move move extrude extrude combine " +
  "fillet fillet move sketchEdit split sketchEdit extrude mirror move move extrude chamferBack chamferBack " +
  "fillet fillet fillet extrude extrude extrude extrude extrude | back back back back back back back back back " +
  "sketchEdit extrude sketchEdit extrude sketchEdit back copy sketchEdit"
).split(" ");
const markerAt = timeline.indexOf("|");

const groups: { label: string; narrow?: boolean; tools: string[] }[] = [
  { label: "CREATE", tools: ["sketch", "extrude", "revolve", "pattern", "form", "box"] },
  { label: "AUTOMATE", tools: ["automate"] },
  { label: "MODIFY", tools: ["press", "fillet", "shell", "combine", "split", "move", "scale", "chamfer"] },
  { label: "ASSEMBLE", tools: ["component", "joint"] },
  { label: "CONSTRUCT", tools: ["construct"] },
  { label: "INSPECT", narrow: true, tools: ["inspect"] },
  { label: "INSERT", narrow: true, tools: ["insert"] },
  { label: "SELECT", narrow: true, tools: ["select"] },
];

export default function App() {
  return (
    <Page>
      <GlobalStyle />
      <TitleBar>
        <QuickAccess>
          <QuickButton $gap={32} aria-label="Data panel"><GridGlyph /></QuickButton>
          <QuickButton $gap={30} aria-label="File"><FileGlyph /><Caret w={13} h={9} color="#636363" /></QuickButton>
          <QuickButton $gap={32} aria-label="Save"><SaveGlyph /></QuickButton>
          <QuickButton $gap={19} aria-label="Undo"><UndoGlyph /><Caret w={13} h={9} color="#636363" /></QuickButton>
          <QuickButton $gap={0} $faded aria-label="Redo"><UndoGlyph flip /><Caret w={13} h={9} color="#959595" /></QuickButton>
        </QuickAccess>
        <HomeTab aria-label="Home"><HomeGlyph /></HomeTab>
        <DocTab $active><DocName><DocCube />B200 v14*</DocName><button aria-label="Close B200"><CloseGlyph /></button></DocTab>
        <DocTab><DocName><DocCube grey />Untitled</DocName><button aria-label="Close Untitled"><CloseGlyph /></button></DocTab>
        <AddTab aria-label="New design"><PlusGlyph /></AddTab>
        <Account>
          <StatusButton aria-label="Extensions"><PlugGlyph /></StatusButton>
          <StatusButton aria-label="Job status"><ClockGlyph /></StatusButton>
          <StatusButton aria-label="Notifications"><BellGlyph /></StatusButton>
          <StatusButton aria-label="Help"><HelpGlyph /></StatusButton>
          <Avatar aria-label="Account"><AvatarArt /><AvatarDot /></Avatar>
        </Account>
      </TitleBar>

      <Ribbon>
        <Workspace>DESIGN<Caret w={10} h={8} /></Workspace>
        <RibbonMain>
          <RibbonTabs>
            {["SOLID", "SURFACE", "MESH", "SHEET METAL", "PLASTIC", "UTILITIES"].map((t, i) => (
              <RibbonTab key={t} $active={i === 0}>{t}</RibbonTab>
            ))}
          </RibbonTabs>
          <Groups>
            {groups.map((g) => (
              <Group key={g.label} $narrow={g.narrow}>
                <Tools>
                  {g.tools.map((t) => <Tool key={t} $active={t === "select"} aria-label={t}><Icon name={t} /></Tool>)}
                </Tools>
                <GroupLabel>{g.label}<Caret w={10} h={8} /></GroupLabel>
              </Group>
            ))}
          </Groups>
        </RibbonMain>
      </Ribbon>

      <Viewport>
        <ModelScene />
        <CubeHolder><ViewCube /></CubeHolder>
        <Browser />
        <NavBar>
          {navArt.map((n) => (
            <NavButton key={n.label} $gap={n.gap} aria-label={n.label}>
              <svg width="27" height="27" viewBox="0 0 27 27">{n.art}</svg>
              {n.gap && <Caret w={10} h={7} color="#222" />}
            </NavButton>
          ))}
        </NavBar>
        <Warning aria-label="Warnings">
          <svg width="28" height="25" viewBox="0 0 28 25">
            <defs><linearGradient id="warn" x2="0" y2="1"><stop stopColor="#fff36b" /><stop offset="1" stopColor="#ffc400" /></linearGradient></defs>
            <path d="M14 1.500L26.500 22q.5 1.500-1 1.500h-23q-1.500 0-1-1.500z" fill="url(#warn)" stroke="#1a1a1a" strokeWidth="1.500" /><path d="M14 8v8M14 18v3" stroke="#222" strokeWidth="3" />
          </svg>
        </Warning>
      </Viewport>

      <Timeline>
        <Playback>
          <button aria-label="To start"><svg width="21" height="24" viewBox="0 0 21 24" fill="currentColor"><path d="M0 0h3v24H0zM20 1v22L4 12z" /></svg></button>
          <button aria-label="Step back"><svg width="21" height="22" viewBox="0 0 21 22" fill="currentColor"><path d="M16 0v22L0 11zM18 6h3v10h-3z" /></svg></button>
          <button aria-label="Play"><svg width="20" height="26" viewBox="0 0 20 26" fill="currentColor"><path d="M0 0l20 13L0 26z" /></svg></button>
          <button aria-label="Step forward"><svg width="21" height="22" viewBox="0 0 21 22" fill="currentColor"><path d="M5 0v22l16-11zM0 6h3v10H0z" /></svg></button>
          <button aria-label="To end"><svg width="21" height="24" viewBox="0 0 21 24" fill="currentColor"><path d="M18 0h3v24h-3zM0 1v22l17-11z" /></svg></button>
        </Playback>
        <TrackArea>
          <TrackScroll />
          <Steps>
            {timeline.map((s, i) =>
              s === "|" ? (
                <Marker key={i}><svg width="20" height="53" viewBox="0 0 20 53" fill="#666"><path d="M0 0h20v5l-8 10v38H9V15L0 5z" /></svg></Marker>
              ) : (
                <Step key={i} $faded={i > markerAt}><button aria-label={`Feature ${i + 1}`}><Icon name={s} size={28} /></button></Step>
              )
            )}
          </Steps>
          <Rail><i /><i /><b /><i /><i /></Rail>
        </TrackArea>
        <Settings aria-label="Timeline settings">
          <svg width="28" height="28" viewBox="-14 -14 28 28" fill="#757575">
            {[0, 45, 90, 135].map((a) => <rect key={a} x="-2.500" y="-13.500" width="5" height="27" transform={`rotate(${a})`} />)}
            <circle r="9.500" /><circle r="4" fill="#f1f1f1" />
          </svg>
        </Settings>
      </Timeline>
    </Page>
  );
}
